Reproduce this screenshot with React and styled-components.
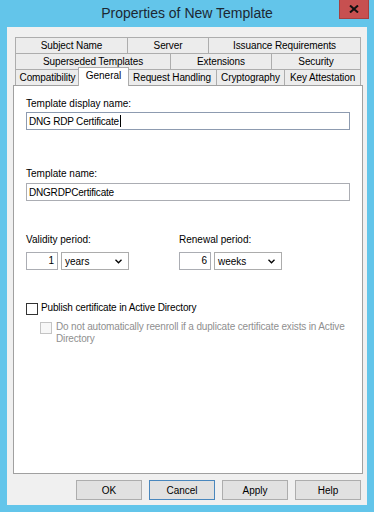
import React from 'react';
import styled, { createGlobalStyle } from 'styled-components';

const Global = createGlobalStyle`
  html, body { margin: 0; padding: 0; background: #63c5ea; }
  body { font-family: "Liberation Sans", Arial, sans-serif; }
  * { box-sizing: border-box; }
`;

const Window = styled.div`
  width: 374px;
  height: 512px;
  background: #63c5ea;
  display: flex;
  flex-direction: column;
`;

const TitleBar = styled.div`
  height: 27px;
  flex: none;
  display: grid;
  grid-template-columns: 1fr auto 1fr;
  align-items: start;
`;

const Title = styled.div`
  grid-column: 2;
  font-size: 14px;
  line-height: 27px;
  color: #1c2833;
  white-space: nowrap;
`;

const CloseButton = styled.div`
  grid-column: 3;
  justify-self: end;
  margin-right: 5px;
  width: 30px;
  height: 19px;
  background: #c75050;
  border: 1px solid #a54040;
  border-top: none;
  display: flex;
  align-items: center;
  justify-content: center;
`;

const Client = styled.div`
  flex: 1;
  margin: 0 7px 7px 7px;
  background: #f0f0f0;
  padding: 10px 4px 5px 6px;
  display: flex;
  flex-direction: column;
  font-size: 10px;
  color: #000;
`;

const TabStrip = styled.div`
  margin: 0 2px;
  display: flex;
  flex-direction: column;
  flex: none;
`;

const TabRow = styled.div`
  display: flex;
  align-items: flex-end;
  height: 16px;
`;

const Tab = styled.div`
  flex: ${p => (p.$last ? '1' : 'none')};
  width: ${p => (p.$last ? 'auto' : `${p.$w}px`)};
  height: 16px;
  border: 1px solid #adadad;
  border-bottom: none;
  border-right: ${p => (p.$last ? '1px solid #adadad' : 'none')};
  background: #ececec;
  font-size: 10px;
  line-height: 15px;
  text-align: center;
  white-space: nowrap;
  letter-spacing: -0.1px;
`;

const SelectedTab = styled.div`
  flex: none;
  width: 51px;
  height: 19px;
  margin: -2px -2px -1px -1px;
  border: 1px solid #adadad;
  border-bottom: none;
  background: #fff;
  position: relative;
  z-index: 1;
  font-size: 10px;
  line-height: 16px;
  text-align: center;
  white-space: nowrap;
`;

const Panel = styled.div`
  flex: 1;
  background: #fff;
  border: 1px solid #a0a0a0;
  padding: 12px 12px 0 12px;
  display: flex;
  flex-direction: column;
`;

const Label = styled.div`
  font-size: 10px;
  line-height: 12px;
  margin-top: ${p => p.$mt || 0}px;
  margin-bottom: ${p => p.$mb || 2}px;
  white-space: nowrap;
`;

const TextBox = styled.div`
  height: 18px;
  border: 1px solid ${p => (p.$focused ? '#8d9bb0' : '#abadb3')};
  padding: 0 2px;
  display: flex;
  align-items: center;
  font-size: 10px;
  letter-spacing: -0.2px;
  white-space: nowrap;
`;

const Caret = styled.span`
  display: inline-block;
  width: 1px;
  height: 12px;
  background: #000;
  margin-left: 1px;
`;

const PeriodRow = styled.div`
  display: grid;
  grid-template-columns: 153px auto;
  margin-top: 33px;
`;

const PeriodGroup = styled.div`
  display: flex;
  flex-direction: column;
`;

const PeriodControls = styled.div`
  display: flex;
  gap: 3px;
  margin-top: 4px;
`;

const NumberBox = styled.div`
  width: 32px;
  height: 18px;
  border: 1px solid #abadb3;
  padding: 0 3px;
  text-align: right;
  font-size: 10px;
  line-height: 16px;
`;

const Select = styled.div`
  width: 68px;
  height: 18px;
  border: 1px solid #acacac;
  background: #fff;
  padding: 0 6px 0 3px;
  display: flex;
  align-items: center;
  justify-content: space-between;
  font-size: 10px;
`;

const CheckRow = styled.div`
  display: flex;
  align-items: flex-start;
  gap: ${p => (p.$sub ? 4 : 3)}px;
  margin-top: ${p => p.$mt}px;
  margin-left: ${p => (p.$sub ? 14 : 0)}px;
  color: ${p => (p.$disabled ? '#8f8f8f' : '#000')};
`;

const Box = styled.div`
  flex: none;
  width: 12px;
  height: 12px;
  margin-top: 1px;
  border: 1px solid ${p => (p.$disabled ? '#c4c4c4' : '#333')};
  background: ${p => (p.$disabled ? '#f7f7f7' : '#fff')};
`;

const CheckText = styled.div`
  font-size: 10px;
  line-height: 12px;
  max-width: 296px;
  letter-spacing: -0.15px;
`;

const ButtonRow = styled.div`
  display: flex;
  justify-content: flex-end;
  gap: 7px;
  margin: 6px 2px 0 0;
  flex: none;
`;

const Button = styled.div`
  width: 66px;
  height: 20px;
  background: #e1e1e1;
  border: 1px solid ${p => (p.$default ? '#4a87bd' : '#adadad')};
  font-size: 10px;
  display: flex;
  align-items: center;
  justify-content: center;
`;

const Chevron = () => (
  <svg width="7" height="5" viewBox="0 0 7 5">
    <polyline points="0.5,0.8 3.5,3.8 6.5,0.8" fill="none" stroke="#000" strokeWidth="1.3" />
  </svg>
);

const CloseGlyph = () => (
  <svg width="10" height="8" viewBox="0 0 10 8">
    <path d="M1 0.5 L9 7.5 M9 0.5 L1 7.5" stroke="#111" strokeWidth="2" />
  </svg>
);

export default function App() {
  return (
    <Window>
      <Global />
      <TitleBar>
        <Title>Properties of New Template</Title>
        <CloseButton><CloseGlyph /></CloseButton>
      </TitleBar>
      <Client>
        <TabStrip>
          <TabRow>
            <Tab $w={112}>Subject Name</Tab>
            <Tab $w={81}>Server</Tab>
            <Tab $last>Issuance Requirements</Tab>
          </TabRow>
          <TabRow>
            <Tab $w={155}>Superseded Templates</Tab>
            <Tab $w={101}>Extensions</Tab>
            <Tab $last>Security</Tab>
          </TabRow>
          <TabRow>
            <Tab $w={64}>Compatibility</Tab>
            <SelectedTab>General</SelectedTab>
            <Tab $w={89}>Request Handling</Tab>
            <Tab $w={68}>Cryptography</Tab>
            <Tab $last>Key Attestation</Tab>
          </TabRow>
        </TabStrip>
        <Panel>
          <Label>Template display name:</Label>
          <TextBox $focused>DNG RDP Certificate<Caret /></TextBox>
          <Label $mt={38} $mb={3}>Template name:</Label>
          <TextBox>DNGRDPCertificate</TextBox>
          <PeriodRow>
            <PeriodGroup>
              <Label $mb={0}>Validity period:</Label>
              <PeriodControls>
                <NumberBox>1</NumberBox>
                <Select>years<Chevron /></Select>
              </PeriodControls>
            </PeriodGroup>
            <PeriodGroup>
              <Label $mb={0}>Renewal period:</Label>
              <PeriodControls>
                <NumberBox>6</NumberBox>
                <Select>weeks<Chevron /></Select>
              </PeriodControls>
            </PeriodGroup>
          </PeriodRow>
          <CheckRow $mt={32}>
            <Box />
            <CheckText>Publish certificate in Active Directory</CheckText>
          </CheckRow>
          <CheckRow $mt={6} $sub $disabled>
            <Box $disabled />
            <CheckText>Do not automatically reenroll if a duplicate certificate exists in Active Directory</CheckText>
          </CheckRow>
        </Panel>
        <ButtonRow>
          <Button>OK</Button>
          <Button $default>Cancel</Button>
          <Button>Apply</Button>
          <Button>Help</Button>
        </ButtonRow>
      </Client>
    </Window>
  );
}
